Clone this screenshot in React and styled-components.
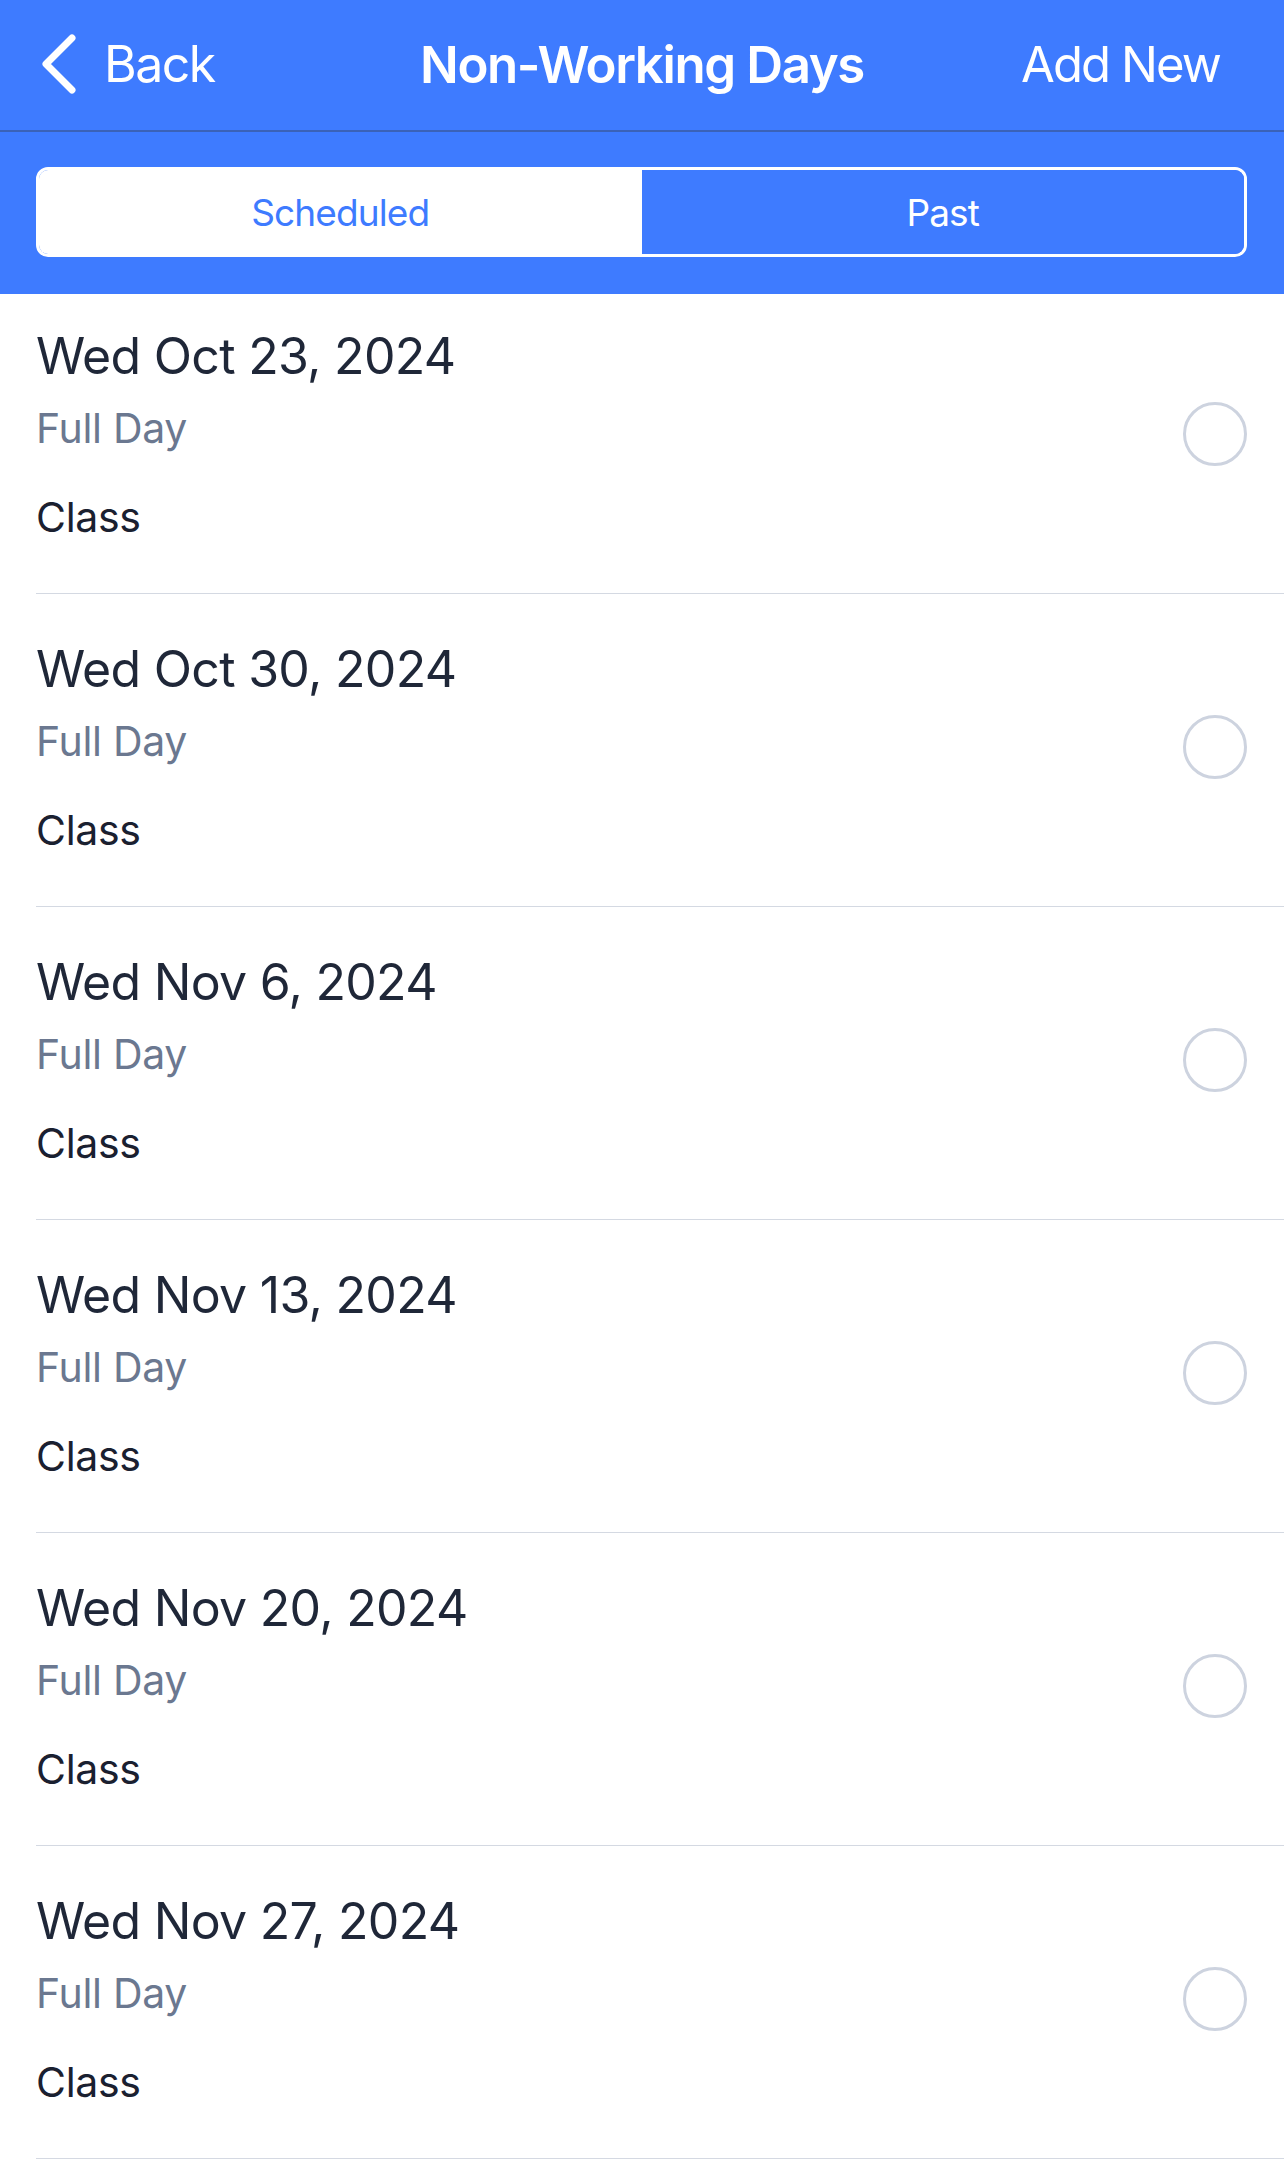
import React from "react";
import styled, { createGlobalStyle } from "styled-components";

const GlobalStyle = createGlobalStyle`
  html, body { margin: 0; padding: 0; background: #ffffff; }
  body { font-family: Inter, "Noto Sans", "Liberation Sans", sans-serif; -webkit-font-smoothing: antialiased; }
  * { box-sizing: border-box; }
`;

const BLUE = "#3E7BFF";

const Page = styled.div`
  width: 1284px;
  min-height: 2162px;
  background: #ffffff;
`;

const TopArea = styled.div`
  background: ${BLUE};
`;

const NavBar = styled.header`
  height: 132px;
  display: grid;
  grid-template-columns: 1fr auto 1fr;
  align-items: center;
  padding: 0 40px;
  border-bottom: 2px solid #3a62b8;
`;

const BackButton = styled.button`
  justify-self: start;
  display: flex;
  align-items: center;
  gap: 28px;
  background: none;
  border: 0;
  padding: 0;
  color: #ffffff;
  font: 400 50px/1 Inter, "Noto Sans", sans-serif;
  letter-spacing: -1.5px;
  cursor: pointer;
  margin-top: -2px;
`;

const Title = styled.h1`
  margin: 0;
  color: #ffffff;
  font: 600 51px/1 Inter, "Noto Sans", sans-serif;
  letter-spacing: -1.4px;
  margin-top: -2px;
`;

const AddButton = styled.button`
  justify-self: end;
  background: none;
  border: 0;
  padding: 0;
  margin-right: 24px;
  color: #ffffff;
  font: 400 49px/1 Inter, "Noto Sans", sans-serif;
  letter-spacing: -1.9px;
  cursor: pointer;
  margin-top: -2px;
`;

const SegmentBar = styled.div`
  padding: 35px 37px 37px 36px;
`;

const Segmented = styled.div`
  display: grid;
  grid-template-columns: 1fr 1fr;
  height: 90px;
  border: 3px solid #ffffff;
  border-radius: 12px;
  overflow: hidden;
`;

const Segment = styled.button`
  border: 0;
  margin: 0;
  padding: 0;
  display: flex;
  align-items: center;
  justify-content: center;
  background: ${(p) => (p.$active ? "#ffffff" : BLUE)};
  color: ${(p) => (p.$active ? BLUE : "#ffffff")};
  font: 400 37px/1 Inter, "Noto Sans", sans-serif;
  letter-spacing: -0.9px;
  cursor: pointer;
`;

const List = styled.ul`
  list-style: none;
  margin: 0;
  padding: 0 0 0 36px;
`;

const Row = styled.li`
  display: flex;
  align-items: center;
  justify-content: space-between;
  padding: 45px 37px 51px 0;
  border-bottom: 1px solid #d4d9e2;
  &:first-child {
    padding-top: 32px;
  }
`;

const Info = styled.div`
  display: flex;
  flex-direction: column;
`;

const DateText = styled.div`
  font-size: 50px;
  line-height: 60px;
  color: #1f2738;
  letter-spacing: -0.7px;
`;

const Kind = styled.div`
  margin-top: 17px;
  font-size: 41px;
  line-height: 50px;
  color: #6b7890;
  letter-spacing: -0.3px;
`;

const Category = styled.div`
  margin-top: 39px;
  font-size: 41px;
  line-height: 50px;
  color: #1a2030;
  letter-spacing: -0.3px;
`;

const Radio = styled.span`
  width: 64px;
  height: 64px;
  border-radius: 50%;
  border: 3px solid #cdd3df;
  flex: none;
`;

const Chevron = () => (
  <svg width="36" height="60" viewBox="0 0 36 60" fill="none">
    <path
      d="M32 4 L6 30 L32 56"
      stroke="#ffffff"
      strokeWidth="7"
      strokeLinecap="round"
      strokeLinejoin="round"
    />
  </svg>
);

const days = [
  "Wed Oct 23, 2024",
  "Wed Oct 30, 2024",
  "Wed Nov 6, 2024",
  "Wed Nov 13, 2024",
  "Wed Nov 20, 2024",
  "Wed Nov 27, 2024",
];

export default function App() {
  return (
    <Page>
      <GlobalStyle />
      <TopArea>
        <NavBar>
          <BackButton>
            <Chevron />
            Back
          </BackButton>
          <Title>Non-Working Days</Title>
          <AddButton>Add New</AddButton>
        </NavBar>
        <SegmentBar>
          <Segmented>
            <Segment $active>Scheduled</Segment>
            <Segment>Past</Segment>
          </Segmented>
        </SegmentBar>
      </TopArea>
      <List>
        {days.map((d) => (
          <Row key={d}>
            <Info>
              <DateText>{d}</DateText>
              <Kind>Full Day</Kind>
              <Category>Class</Category>
            </Info>
            <Radio />
          </Row>
        ))}
      </List>
    </Page>
  );
}
